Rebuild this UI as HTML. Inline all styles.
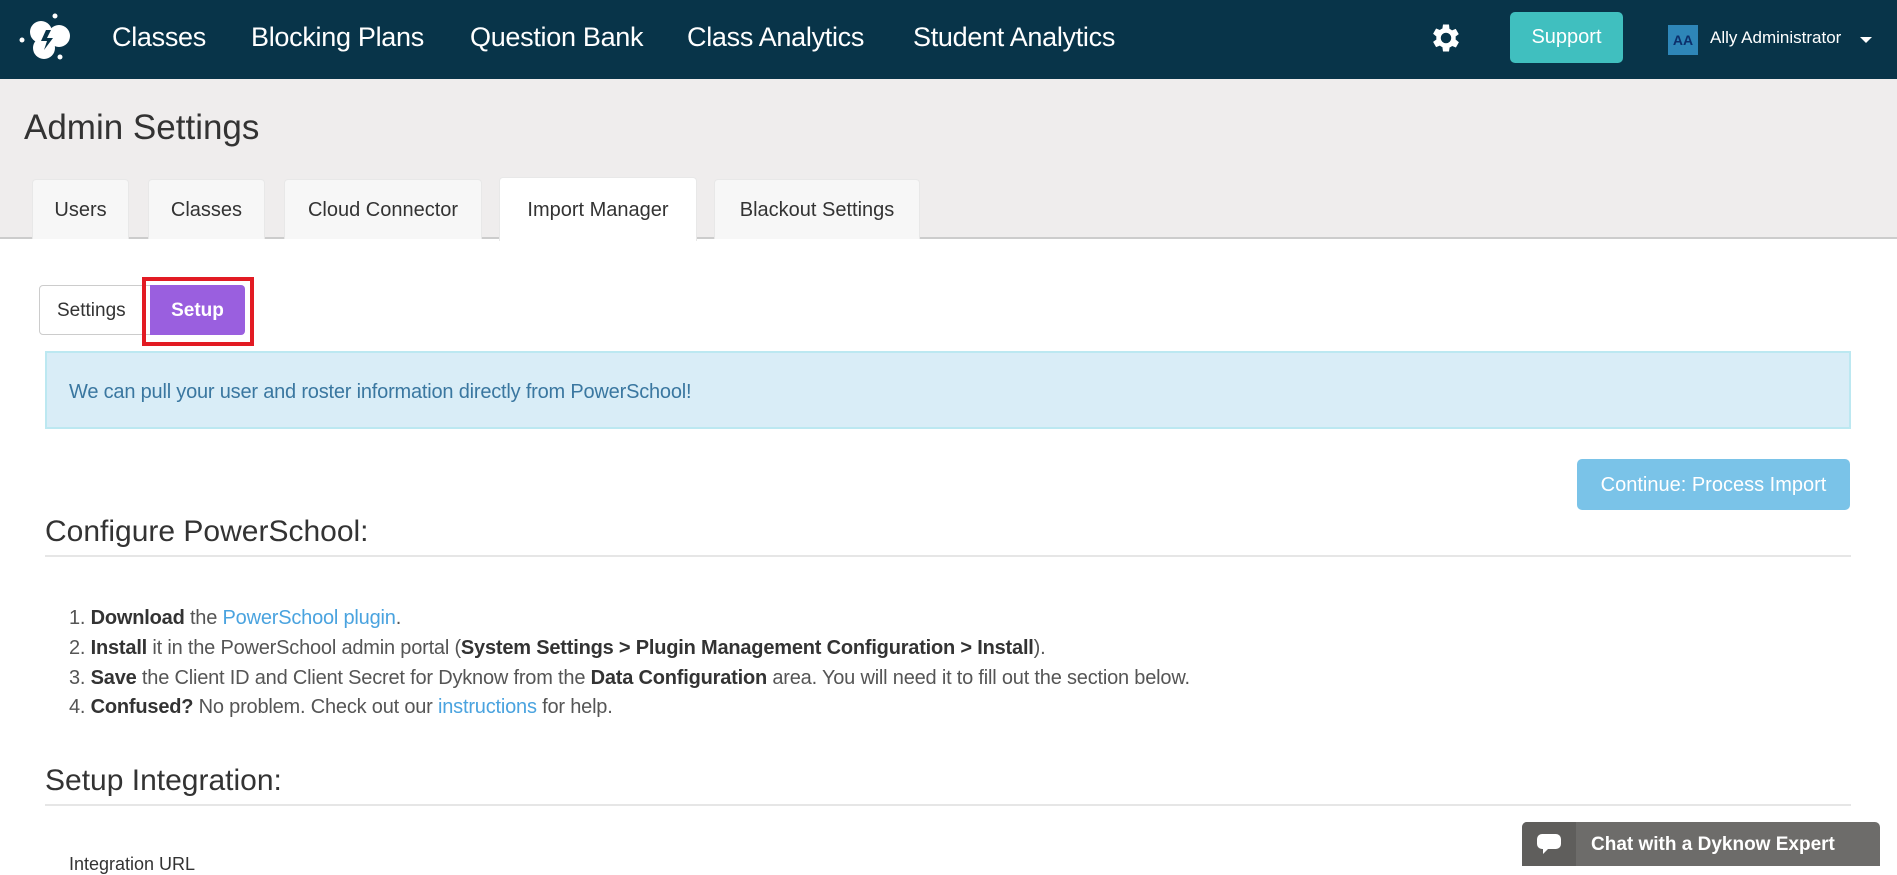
<!DOCTYPE html>
<html><head><meta charset="utf-8"><style>
*{box-sizing:border-box;margin:0;padding:0}
body{width:1897px;height:866px;overflow:hidden;background:#fff;font-family:"Liberation Sans",sans-serif;color:#333;position:relative}
.nav{position:absolute;left:0;top:0;width:1897px;height:79px;background:#083449}
.nav .it{position:absolute;top:22px;font-size:27px;color:#fff;letter-spacing:-0.3px}
.grey{position:absolute;left:0;top:79px;width:1897px;height:160px;background:#efeded;border-bottom:2px solid #ccc}
.tab{position:absolute;top:179px;height:60px;background:#f7f7f7;border:1px solid #e8e8e8;border-bottom:none;border-radius:4px 4px 0 0;font-size:20px;color:#333;padding-top:19px;text-align:center}
.abs{position:absolute}
ol{list-style:none}
ol li{position:absolute;left:69px;font-size:20px;color:#555;white-space:nowrap;letter-spacing:-0.2px}
b{color:#333}
a{color:#4aa3df;text-decoration:none}
</style></head><body>
<div class="nav">
<svg class="abs" style="left:0;top:0" width="90" height="79" viewBox="0 0 90 79">
<circle cx="55" cy="16" r="2.5" fill="#fff"/><circle cx="22" cy="40" r="2.5" fill="#fff"/><circle cx="60" cy="57" r="2.5" fill="#fff"/>
<circle cx="41" cy="32" r="11" fill="#fff"/><circle cx="59" cy="36" r="11" fill="#fff"/><circle cx="44" cy="48" r="11" fill="#fff"/><circle cx="48" cy="38" r="10" fill="#fff"/>
<path d="M46 30 L41 41 L47 41 L44 50 L53 38 L47 38 L51 30Z" fill="#083449"/>
</svg>
<div class="it" style="left:112px">Classes</div>
<div class="it" style="left:251px">Blocking Plans</div>
<div class="it" style="left:470px">Question Bank</div>
<div class="it" style="left:687px">Class Analytics</div>
<div class="it" style="left:913px">Student Analytics</div>
<svg class="abs" style="left:1427px;top:20px" width="38" height="36" viewBox="0 0 24 24"><path fill="#fff" d="M19.4 13a7.5 7.5 0 0 0 0-2l2.1-1.6-2-3.5-2.5 1a7 7 0 0 0-1.7-1L15 3h-4l-.4 2.7a7 7 0 0 0-1.7 1l-2.5-1-2 3.5L6.6 11a7.5 7.5 0 0 0 0 2l-2.2 1.6 2 3.5 2.5-1a7 7 0 0 0 1.7 1L11 21h4l.4-2.7a7 7 0 0 0 1.7-1l2.5 1 2-3.5zM13 15.5a3.5 3.5 0 1 1 0-7 3.5 3.5 0 0 1 0 7z" transform="translate(-1 0)"/></svg>
<div class="abs" style="left:1510px;top:12px;width:113px;height:51px;background:#40bfbf;border-radius:5px;color:#fff;font-size:20px;text-align:center;line-height:51px">Support</div>
<div class="abs" style="left:1668px;top:25px;width:30px;height:30px;background:#2e86b8;color:#0c2f6b;font-weight:bold;font-size:14px;text-align:center;line-height:30px">AA</div>
<div class="abs" style="left:1710px;top:28px;font-size:17px;color:#fff">Ally Administrator</div>
<div class="abs" style="left:1860px;top:37px;width:0;height:0;border-left:6px solid transparent;border-right:6px solid transparent;border-top:6px solid #fff"></div>
</div>
<div class="grey"></div>
<div class="abs" style="left:24px;top:108px;font-size:35px;color:#333">Admin Settings</div>
<div class="tab" style="left:32px;width:97px">Users</div>
<div class="tab" style="left:148px;width:117px">Classes</div>
<div class="tab" style="left:284px;width:198px">Cloud Connector</div>
<div class="tab" style="left:499px;top:177px;height:64px;width:198px;background:#fff;padding-top:21px">Import Manager</div>
<div class="tab" style="left:714px;width:206px">Blackout Settings</div>
<div class="abs" style="left:39px;top:285px;width:113px;height:50px;border:1px solid #ccc;border-radius:4px 0 0 4px;font-size:19px;padding:14px 0 0 17px;color:#333">Settings</div>
<div class="abs" style="left:142px;top:277px;width:112px;height:69px;border:4px solid #e21b23"></div>
<div class="abs" style="left:150px;top:285px;width:95px;height:50px;background:#9a5fdf;border-radius:0 4px 4px 0;color:#fff;font-weight:bold;font-size:19px;text-align:center;line-height:52px">Setup</div>
<div class="abs" style="left:45px;top:351px;width:1806px;height:78px;background:#d9edf7;border:2px solid #bce8f1;color:#3a77a0;font-size:20px;padding:28px 0 0 22px;letter-spacing:-0.2px">We can pull your user and roster information directly from PowerSchool!</div>
<div class="abs" style="left:1577px;top:459px;width:273px;height:51px;background:#7ac3e8;border-radius:5px;color:#fff;font-size:20px;text-align:center;line-height:53px">Continue: Process Import</div>
<div class="abs" style="left:45px;top:515px;font-size:30px;color:#333">Configure PowerSchool:</div>
<div class="abs" style="left:45px;top:555px;width:1806px;height:2px;background:#e6e6e6"></div>
<ol>
<li style="top:607px">1. <b>Download</b> the <a>PowerSchool plugin</a>.</li>
<li style="top:637px">2. <b>Install</b> it in the PowerSchool admin portal (<b>System Settings &gt; Plugin Management Configuration &gt; Install</b>).</li>
<li style="top:667px">3. <b>Save</b> the Client ID and Client Secret for Dyknow from the <b>Data Configuration</b> area. You will need it to fill out the section below.</li>
<li style="top:696px">4. <b>Confused?</b> No problem. Check out our <a>instructions</a> for help.</li>
</ol>
<div class="abs" style="left:45px;top:764px;font-size:30px;color:#333">Setup Integration:</div>
<div class="abs" style="left:45px;top:804px;width:1806px;height:2px;background:#e6e6e6"></div>
<div class="abs" style="left:69px;top:854px;font-size:18px;color:#333">Integration URL</div>
<div class="abs" style="left:1522px;top:822px;width:358px;height:44px;background:#6d6c6a;border-radius:5px 5px 0 0;overflow:hidden">
<div class="abs" style="left:0;top:0;width:54px;height:44px;background:#5f5e5c"></div>
<svg class="abs" style="left:14px;top:11px" width="26" height="24" viewBox="0 0 26 24"><path d="M6 1h14a5 5 0 0 1 5 5v5a5 5 0 0 1-5 5H12l-5 5v-5H6a5 5 0 0 1-5-5V6a5 5 0 0 1 5-5z" fill="#fff"/></svg>
<div class="abs" style="left:69px;top:12px;color:#fff;font-weight:bold;font-size:19px;white-space:nowrap">Chat with a Dyknow Expert</div>
</div>
</body></html>
